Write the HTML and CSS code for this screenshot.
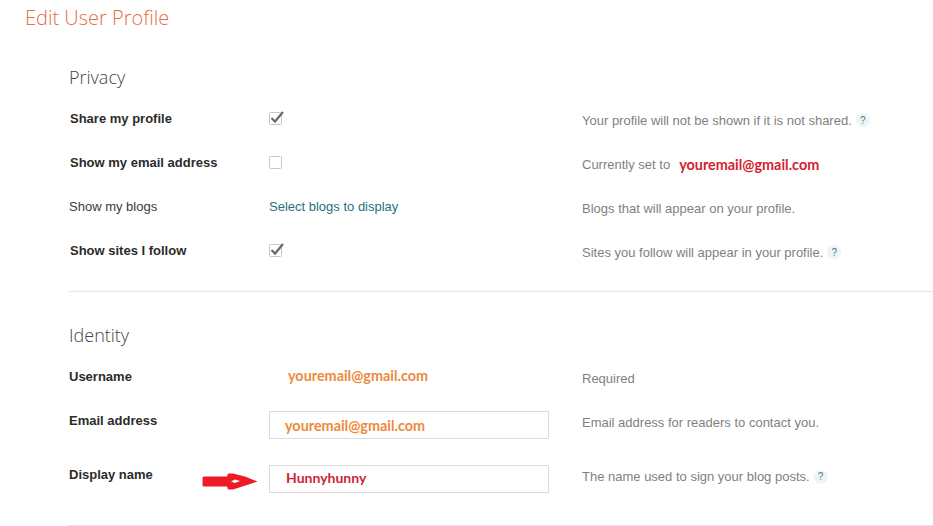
FILE: index.html
```html
<!DOCTYPE html>
<html lang="en">
<head>
<meta charset="utf-8">
<title>Edit User Profile</title>
<link rel="stylesheet" href="styles.css">
</head>
<body>
<h1 class="page-title">Edit User Profile</h1>
<main class="content">
  <section class="section section-privacy">
    <h2 class="section-title">Privacy</h2>
    <div class="row">
      <div class="label">Share my profile</div>
      <div class="control"><svg class="check" viewBox="0 0 16 16"><rect x="0.5" y="2.5" width="12" height="12" rx="1" fill="#fff" stroke="#c8c8c8"/><path d="M2.500 8L6 11.500L14 2" fill="none" stroke="#6a6a6a" stroke-width="2.200"/></svg></div>
      <div class="hint">Your profile will not be shown if it is not shared.<span class="help">?</span></div>
    </div>
    <div class="row">
      <div class="label">Show my email address</div>
      <div class="control"><svg class="check" viewBox="0 0 16 16"><rect x="0.5" y="2.5" width="12" height="12" rx="1" fill="#fff" stroke="#c8c8c8"/></svg></div>
      <div class="hint">Currently set to<span class="mail-red">youremail@gmail.com</span></div>
    </div>
    <div class="row">
      <div class="label label-plain">Show my blogs</div>
      <div class="control"><a class="link" href="#">Select blogs to display</a></div>
      <div class="hint">Blogs that will appear on your profile.</div>
    </div>
    <div class="row">
      <div class="label">Show sites I follow</div>
      <div class="control"><svg class="check" viewBox="0 0 16 16"><rect x="0.5" y="2.5" width="12" height="12" rx="1" fill="#fff" stroke="#c8c8c8"/><path d="M2.500 8L6 11.500L14 2" fill="none" stroke="#6a6a6a" stroke-width="2.200"/></svg></div>
      <div class="hint">Sites you follow will appear in your profile.<span class="help">?</span></div>
    </div>
  </section>
  <section class="section section-identity">
    <h2 class="section-title">Identity</h2>
    <div class="row row-user">
      <div class="label">Username</div>
      <div class="control"><span class="mail-orange mail-user">youremail@gmail.com</span></div>
      <div class="hint">Required</div>
    </div>
    <div class="row row-field">
      <div class="label">Email address</div>
      <div class="control"><div class="field"><span class="mail-orange">youremail@gmail.com</span></div></div>
      <div class="hint">Email address for readers to contact you.</div>
    </div>
    <div class="row row-field">
      <div class="label">Display name</div>
      <div class="control"><div class="field field-name"><span class="name-red">Hunnyhunny</span></div></div>
      <div class="hint">The name used to sign your blog posts.<span class="help">?</span></div>
      <svg class="arrow" viewBox="0 0 56 18"><path d="M2 3.500H25L26 0.500L31 0.500L43 3.500L55.500 8.500L45 12L31 16.500L26 16.500L25 13.500H2Q0.500 13.500 0.500 12V5Q0.500 3.500 2 3.500Z" fill="#ed1c24"/><path d="M29 8.500L33 6.500L38 8L33 10Z" fill="#fff"/></svg>
    </div>
  </section>
</main>
</body>
</html>
```

FILE: styles.css
```css
html, body {
  margin: 0;
  padding: 0;
  background: #fff;
  overflow: hidden;
}
body {
  width: 933px;
  height: 526px;
  font-family: "Liberation Sans", Arial, sans-serif;
  font-size: 13px;
  color: #2b2b2b;
}
.page-title {
  margin: 0;
  padding: 4px 0 0 25px;
  height: 30px;
  font-family: "Open Sans", sans-serif;
  font-weight: 300;
  font-size: 20px;
  line-height: 27px;
  color: #e0703f;
}
.content {
  padding: 30px 0 0 69px;
}
.section {
  border-bottom: 1px solid #e6e6e6;
}
.section-privacy {
  height: 227px;
}
.section-identity {
  height: 233px;
}
.section-title {
  margin: 0;
  font-family: "Open Sans", sans-serif;
  font-weight: 300;
  font-size: 18px;
  line-height: 26px;
  color: #444;
}
.section-privacy .section-title {
  margin-bottom: 6px;
}
.section-identity .section-title {
  padding-top: 30px;
  margin-bottom: 10px;
}
.row {
  position: relative;
  display: grid;
  grid-template-columns: 200px 313px 1fr;
  align-items: center;
  height: 44px;
}
.label {
  font-weight: 700;
  color: #2b2b2b;
}
.section-privacy .label {
  padding-left: 1px;
}
.section-privacy .label-plain {
  padding-left: 0;
  font-weight: 400;
  color: #3a3a3a;
}
.control {
  display: flex;
  align-items: center;
}
.check {
  display: block;
  width: 16px;
  height: 16px;
}
.link {
  color: #1f6f7e;
  text-decoration: none;
  font-size: 13px;
}
.hint {
  margin-top: 4px;
  color: #7f7f7f;
  display: flex;
  align-items: center;
  font-size: 13px;
  white-space: nowrap;
}
.help {
  display: inline-flex;
  align-items: center;
  justify-content: center;
  width: 14px;
  height: 14px;
  margin-left: 4px;
  border-radius: 50%;
  background: #f0f4f6;
  color: #3a8290;
  font-size: 10px;
  font-weight: 400;
}
.mail-red,
.mail-orange,
.name-red {
  font-family: "Lato", sans-serif;
  font-weight: 700;
  font-size: 14.4px;
}
.name-red {
  font-size: 14px;
  color: #cf2338;
}
.mail-red {
  margin-left: 9px;
  color: #d4212f;
}
.mail-orange {
  color: #ee8a3c;
}
.mail-user {
  margin: 0 0 2px 19px;
}
.row-user {
  height: 36px;
}
.row-user + .row-field {
  margin-top: 14px;
}
.row-field {
  height: 54px;
  align-items: start;
}
.row-field .label {
  margin-top: 4px;
  line-height: 18px;
}
.row-field .hint {
  margin-top: 4px;
  line-height: 22px;
}
.row-field .field {
  margin-top: 3px;
}
.field {
  box-sizing: border-box;
  width: 280px;
  height: 28px;
  padding: 0 0 0 15px;
  display: flex;
  align-items: center;
  border: 1px solid #dcdcdc;
  background: #fff;
}
.field-name {
  padding: 0 0 4px 16px;
}
.arrow {
  position: absolute;
  left: 133px;
  top: 11px;
  width: 56px;
  height: 18px;
}
```
